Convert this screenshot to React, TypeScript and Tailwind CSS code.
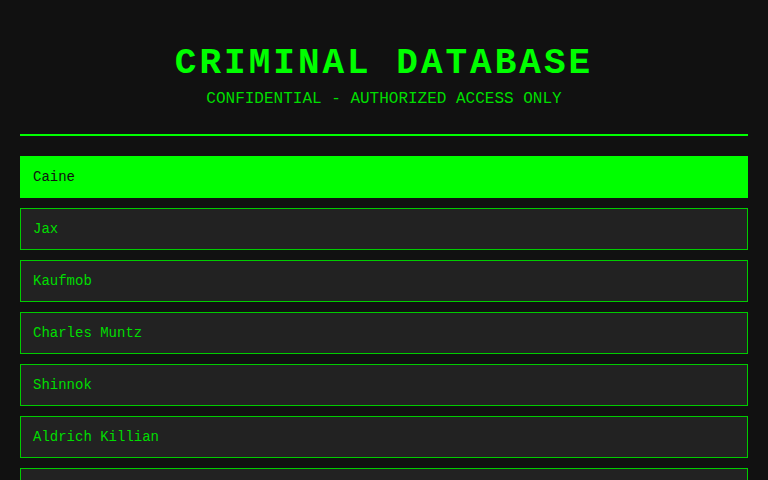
import { useState } from 'react';

const criminals = [
  'Caine',
  'Jax',
  'Kaufmob',
  'Charles Muntz',
  'Shinnok',
  'Aldrich Killian',
  'Hades',
];

const mono = { fontFamily: '"Liberation Mono", "DejaVu Sans Mono", monospace' };

export default function App() {
  const [selected, setSelected] = useState(0);

  return (
    <div className="min-h-screen bg-[#111111] px-5 pt-5" style={mono}>
      {/* header with green rule underneath */}
      <header className="mb-5 border-b-2 border-[#00ff00] pb-[23px] pt-[22px] text-center">
        <h1 className="text-[36px] font-bold leading-[43px] tracking-[3px] text-[#00ff00]">
          CRIMINAL DATABASE
        </h1>
        <p className="mt-[2px] text-base leading-6 text-[#00dd00]">
          CONFIDENTIAL - AUTHORIZED ACCESS ONLY
        </p>
      </header>

      <ul className="flex flex-col gap-[10px]">
        {criminals.map((name, i) => (
          <li key={name}>
            <button
              onClick={() => setSelected(i)}
              className={
                i === selected
                  ? 'block w-full border border-[#00ff00] bg-[#00ff00] px-3 py-[10px] text-left text-sm leading-5 text-[#111111]'
                  : 'block w-full border border-[#00cc00] bg-[#222222] px-3 py-[10px] text-left text-sm leading-5 text-[#00dd00]'
              }
            >
              {name}
            </button>
          </li>
        ))}
      </ul>
    </div>
  );
}
